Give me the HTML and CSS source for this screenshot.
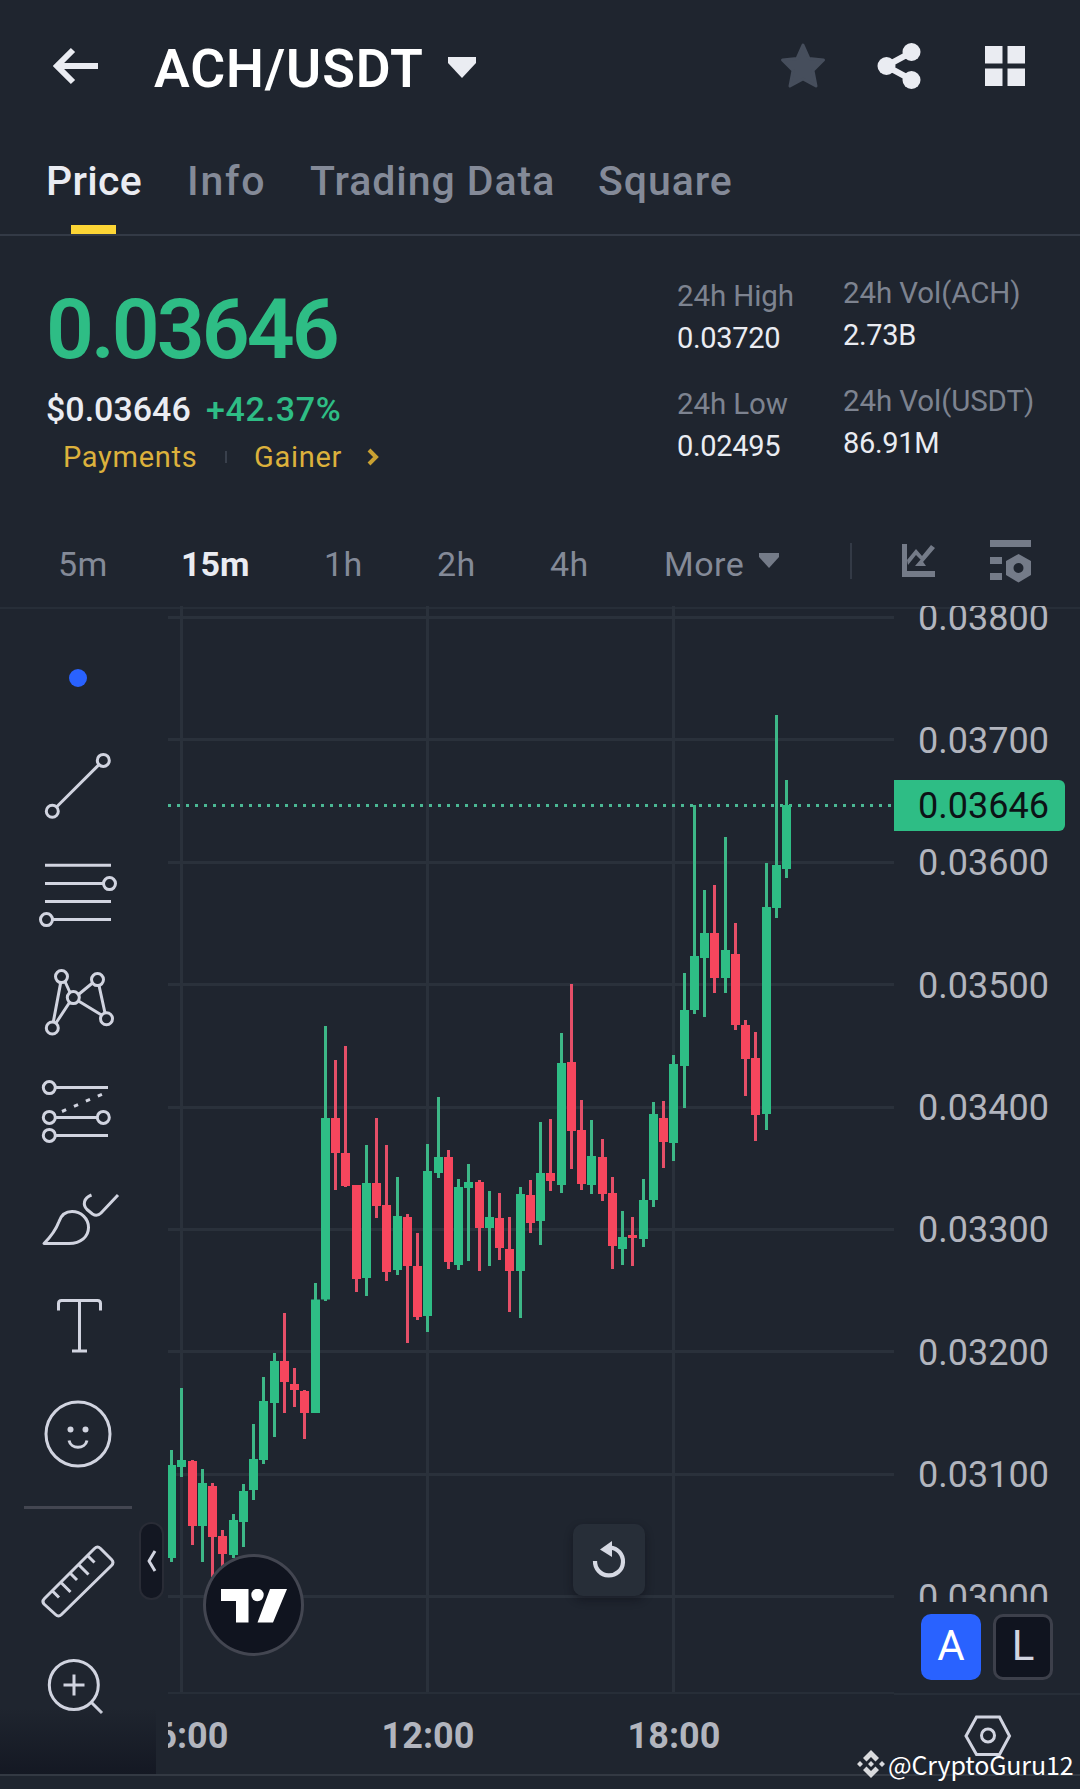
FILE: index.html
```html
<!DOCTYPE html>
<html lang="en">
<head>
    <meta charset="UTF-8">
    <meta name="viewport" content="width=device-width, initial-scale=1.0">
    <title>ACH/USDT</title>
    <link rel="stylesheet" href="styles.css">
</head>
<body>
    <header class="header">
        <svg class="back" width="48" height="40" viewBox="0 0 48 40">
            <path d="M46 20H6M21 4L5 20l16 16" fill="none" stroke="#eaecf2" stroke-width="6"/>
        </svg>
        <h1>ACH/USDT</h1>
        <svg class="caret" width="28" height="21" viewBox="0 0 28 21">
            <path d="M0 0h28v6L14 21 0 6z" fill="#eaecf2"/>
        </svg>
        <div class="header-icons">
            <svg width="46" height="48" viewBox="0 0 46 48">
                <path d="M23 3l6 13.500 14.500 1.500-10.500 10.500 3 15.500-13-7-13 7 3-15.500L2.500 18 17 16.500z" fill="#464e5c" stroke="#464e5c" stroke-width="3" stroke-linejoin="round"/>
            </svg>
            <svg width="44" height="48" viewBox="0 0 44 48" fill="#eaecf2">
                <path d="M35 10L9 24l26 14" fill="none" stroke="#eaecf2" stroke-width="6"/>
                <circle cx="9.500" cy="24" r="9"/>
                <circle cx="34.500" cy="10" r="9"/>
                <circle cx="34.500" cy="38" r="9"/>
            </svg>
            <svg width="40" height="40" viewBox="0 0 40 40">
                <path d="M0 0h17.500v17.500H0zM22.500 0H40v17.500H22.500zM0 22.500h17.500V40H0zM22.500 22.500H40V40H22.500z" fill="#eaecf2"/>
            </svg>
        </div>
    </header>

    <nav class="tabs">
        <a class="tab active">Price</a>
        <a class="tab info">Info</a>
        <a class="tab trading">Trading Data</a>
        <a class="tab">Square</a>
    </nav>

    <section class="ticker">
        <div class="quote">
            <div class="last-price">0.03646</div>
            <div class="change"><span class="usd">$0.03646</span><span class="percent">+42.37%</span></div>
            <div class="tags">
                <span class="tag-name">Payments</span>
                <span class="tag-sep"></span>
                <span class="tag-gainer">Gainer</span>
                <svg width="12" height="18" viewBox="0 0 12 18">
                    <path d="M2 2l7 7-7 7" fill="none" stroke="#c9a132" stroke-width="4"/>
                </svg>
            </div>
        </div>
        <dl class="stats">
            <dt>24h High</dt>
            <dd>0.03720</dd>
            <dt>24h Low</dt>
            <dd>0.02495</dd>
        </dl>
        <dl class="stats volume">
            <dt>24h Vol(ACH)</dt>
            <dd>2.73B</dd>
            <dt>24h Vol(USDT)</dt>
            <dd>86.91M</dd>
        </dl>
    </section>

    <div class="intervals">
        <span class="five">5m</span>
        <span class="fifteen selected">15m</span>
        <span class="hour">1h</span>
        <span class="hour">2h</span>
        <span class="four">4h</span>
        <span class="more">More</span>
        <svg class="more-caret" width="20" height="15" viewBox="0 0 20 15"><path d="M0 0h20v4L10 15 0 4z"/></svg>
        <i class="bar-sep"></i>
        <svg class="chart-type" width="33" height="34" viewBox="0 0 33 34">
            <path d="M0 0h5v27h28v6H0zM5 16L14 5l6 7L29 1l4 3-12 14-7-7-8 10zM13 22l6-7 5 7z"/>
        </svg>
        <svg class="chart-settings" width="42" height="43" viewBox="0 0 42 43">
            <path d="M0 0h41v7H0zM0 17h12v7H0zM0 33h12v7H0z"/>
            <path d="M28.500 14L41 21v14l-12.500 7.500L16 35V21zM28.500 23a5 5 0 100 10 5 5 0 000-10z" fill-rule="evenodd"/>
        </svg>
    </div>

    <main class="chart">
        <aside class="tools">
            <svg viewBox="0 0 156 108"><circle class="dot" cx="78" cy="54" r="9"/></svg>
            <svg viewBox="0 0 156 108">
                <circle cx="52.300" cy="79.300" r="6"/><circle cx="103.300" cy="28.400" r="6"/>
                <path d="M56.500 75L99 32.600"/>
            </svg>
            <svg viewBox="0 0 156 108">
                <path d="M45 25.200h66M45 43.600h58M45 61.600h66M53 79.600h58"/>
                <circle cx="109.500" cy="43.600" r="6"/><circle cx="46.500" cy="79.600" r="6"/>
            </svg>
            <svg viewBox="0 0 156 108">
                <path d="M60.700 34.600L53.300 74M65 33.500l5 11M56 75l13.500-20.500M78.500 46.500L92.500 35M78.500 53l23 14M99 37.500l6 27.500"/>
                <circle cx="61.500" cy="28.600" r="6"/><circle cx="97.500" cy="31.600" r="6"/>
                <circle cx="73.300" cy="49.600" r="6"/><circle cx="52.300" cy="80" r="6"/>
                <circle cx="106.500" cy="70.700" r="6"/>
            </svg>
            <svg viewBox="0 0 156 108">
                <path d="M55.500 31.600H108M55.500 61.400h42M55.500 79.400H108"/>
                <path d="M62 55.500L106 36.500" stroke-dasharray="4.500 8.500"/>
                <circle cx="49.300" cy="31.600" r="6"/><circle cx="49.300" cy="61.400" r="6"/>
                <circle cx="103.300" cy="61.400" r="6"/><circle cx="49.300" cy="79.400" r="6"/>
            </svg>
            <svg viewBox="0 0 156 108">
                <path d="M44 79.500h25c12 0 19.500-7 19.500-16S81 47.500 72 47.500c-7 0-11 4-13 10-3 8-8 15-15 22z"/>
                <path d="M91.500 31c-8 3-9 10-4.500 14.500l5.500 4.500c3 2 6 1.500 8.500-1l17-18"/>
            </svg>
            <svg viewBox="0 0 156 108">
                <path d="M58.500 38.500v-7q0-3 3-3h36q3 0 3 3v7M79.500 28.500V79M72 79h15"/>
            </svg>
            <svg viewBox="0 0 156 108">
                <circle cx="78" cy="54" r="32"/>
                <path d="M69 60.500c2 9 16 9 18 0"/>
                <circle class="eye" cx="70.500" cy="49.500" r="3"/><circle class="eye" cx="85.500" cy="49.500" r="3"/>
            </svg>
            <hr>
            <svg viewBox="0 0 156 108">
                <path d="M44.500 71.500l50-50q3-3 6 0l11 11q3 3 0 6l-50 49q-3 3-6 0l-11-10q-3-3 0-6zM53 64.500l6 6M61.500 56l9 9M71 47l6 6M79.500 38.500l9 9M88.500 29.500l6 6"/>
            </svg>
            <svg viewBox="0 0 156 108">
                <circle cx="73.800" cy="50" r="24.500"/>
                <path d="M63.500 50h21M74 39.500v21M91.500 67.500l10.500 10.500"/>
            </svg>
            <div class="tools-fade"></div>
            <div class="collapse">
                <svg width="10" height="24" viewBox="0 0 10 24"><path d="M8 2L2 12l6 10"/></svg>
            </div>
        </aside>

        <div class="plot">
            <svg id="candles" width="726" height="1088" viewBox="168 606 726 1088"></svg>
            <div class="times"><span>06:00</span><span>12:00</span><span>18:00</span></div>
            <div class="tv-logo">
                <svg width="66" height="34" viewBox="0 0 66 34" fill="#fff">
                    <path d="M0 0h27.500v33.500H15V12H0zM49 0h17L52 33.500H36.500z"/><circle cx="36.500" cy="6" r="6.200"/>
                </svg>
            </div>
            <div class="reset">
                <svg width="36" height="42" viewBox="0 0 36 42">
                    <path d="M4 20a14 14 0 1015-13.500" fill="none" stroke="#d6d9e3" stroke-width="4.200"/>
                    <path d="M9 8.500L21 0v16z" fill="#d6d9e3"/>
                </svg>
            </div>
        </div>

        <div class="axis">
            <div class="prices">
                <span>0.03800</span>
                <span>0.03700</span>
                <span>0.03600</span>
                <span>0.03500</span>
                <span>0.03400</span>
                <span>0.03300</span>
                <span>0.03200</span>
                <span>0.03100</span>
                <span>0.03000</span>
            </div>
            <div class="modes"><b class="auto">A</b><b class="log">L</b></div>
            <svg class="hex" width="48" height="42" viewBox="0 0 48 42" fill="none" stroke="#d1d4e0" stroke-width="3">
                <path d="M12.500 2h23l10 19-10 18.500h-23L2 21z"/><circle cx="24" cy="20.500" r="6.500"/>
            </svg>
            <div class="price-tag">0.03646</div>
        </div>
    </main>

    <div class="watermark">
        <svg width="28" height="28" viewBox="0 0 28 28" fill="#d9dadd">
            <path d="M14 0l8 8-3.500 3.500L14 7l-4.500 4.500L6 8zM14 28l8-8-3.500-3.500L14 21l-4.500-4.500L6 20zM3 11l3 3-3 3-3-3zM25 11l3 3-3 3-3-3zM14 11l3 3-3 3-3-3z"/>
        </svg>
        <span>@CryptoGuru12</span>
    </div>

    <script src="chart.js"></script>
</body>
</html>
```
FILE: styles.css
```css
body {
    margin: 0;
    width: 1080px;
    height: 1789px;
    overflow: hidden;
    position: relative;
    background-color: #1f252f;
    color: #eaecf2;
    font-family: Roboto, "Liberation Sans", sans-serif;
}

svg {
    display: block;
    flex-shrink: 0;
}

.header {
    display: flex;
    align-items: center;
    height: 132px;
    padding: 0 55px 0 52px;
}

h1 {
    width: 294px;
    margin: 0 0 0 54px;
    padding-top: 6px;
    font-size: 53.5px;
    line-height: 60px;
    font-weight: 600;
    letter-spacing: 0.9px;
    color: #fff;
}

.caret {
    margin-top: 2px;
}

.header-icons {
    display: flex;
    align-items: center;
    margin-left: auto;
}

.header-icons svg:nth-child(2) {
    margin: 0 64px 0 51px;
}

/* Page tabs */
.tabs {
    display: flex;
    height: 102px;
    padding-left: 46px;
    border-bottom: 2px solid #333a46;
    font-size: 41px;
    line-height: 98px;
    font-weight: 500;
    letter-spacing: 0.95px;
    color: #848a98;
}

.tab {
    position: relative;
    width: 141px;
    white-space: nowrap;
}

.tab.info {
    width: 123px;
    letter-spacing: 1.8px;
}

.tab.trading {
    width: 288px;
}

.tab.active {
    letter-spacing: 0.3px;
    color: #eaecf2;
}

.tab.active::after {
    content: "";
    position: absolute;
    left: 25px;
    bottom: 0;
    width: 45px;
    height: 9px;
    background-color: #fcd535;
}

/* Ticker */
.ticker {
    display: flex;
    height: 288px;
}

.quote {
    width: 631px;
    padding: 52px 0 0 46px;
}

.last-price {
    font-size: 84px;
    line-height: 84px;
    font-weight: 600;
    letter-spacing: -3px;
    color: #2ebd85;
}

.change {
    display: flex;
    margin-top: 16px;
    font-size: 34px;
    line-height: 42px;
    font-weight: 500;
}

.usd {
    width: 160px;
}

.percent {
    letter-spacing: 0.7px;
    color: #2ebd85;
}

.tags {
    display: flex;
    align-items: center;
    margin-top: 7px;
    padding-left: 17px;
    font-size: 29px;
    line-height: 40px;
    letter-spacing: 0.7px;
    color: #dcb13c;
}

.tag-name {
    width: 162px;
}

.tag-sep {
    width: 2px;
    height: 12px;
    margin-right: 27px;
    background-color: #39404c;
}

.tag-gainer {
    width: 113px;
}

.stats {
    width: 166px;
    margin: 0;
    padding-top: 42px;
    font-size: 29.5px;
    line-height: 36px;
    white-space: nowrap;
}

.stats.volume {
    width: 237px;
    padding-top: 39px;
}

.stats dt {
    letter-spacing: -0.1px;
    color: #7d8390;
}

.stats dd {
    margin: 6px 0 30px;
    font-size: 29px;
    letter-spacing: -0.3px;
}

/* Interval bar */
.intervals {
    display: flex;
    align-items: center;
    height: 80px;
    padding: 0 0 2px 58px;
    font-size: 34px;
    color: #848a98;
    fill: #747b88;
}

.intervals .five {
    width: 123px;
    letter-spacing: 0.5px;
}

.intervals .fifteen {
    width: 143px;
}

.intervals .hour {
    width: 113px;
    letter-spacing: 0.5px;
}

.intervals .four {
    width: 114px;
    letter-spacing: 0.5px;
}

.intervals .more {
    width: 95px;
    letter-spacing: 0.5px;
}

.selected {
    font-weight: 700;
    color: #eaecf2;
}

.more-caret {
    margin-top: -8px;
}

.bar-sep {
    width: 2px;
    height: 36px;
    margin: -6px 50px 0 71px;
    background-color: #333a46;
}

.chart-type {
    margin: -6px 55px 0 0;
}

.chart-settings {
    margin-top: -5px;
}

/* Chart */
.chart {
    display: flex;
    position: relative;
    height: 1168px;
    border-bottom: 2px solid #333943;
}

.chart::before {
    content: "";
    position: absolute;
    top: 1px;
    width: 100%;
    height: 2px;
    background-color: #272e38;
}

.tools {
    position: relative;
    width: 168px;
    padding-top: 18px;
    box-sizing: border-box;
    overflow: hidden;
}

.tools svg {
    width: 156px;
    height: 108px;
    fill: none;
    stroke: #d1d4e0;
    stroke-width: 3px;
    stroke-linejoin: round;
}

.tools .dot {
    fill: #2962ff;
    stroke: none;
}

.tools .eye {
    fill: #d1d4e0;
    stroke: none;
}

.tools hr {
    width: 108px;
    height: 3px;
    margin: 18px 0 18px 24px;
    border: 0;
    background-color: #434651;
}

.tools-fade {
    position: absolute;
    left: 0;
    bottom: 0;
    width: 156px;
    height: 66px;
    background: linear-gradient(rgba(20, 24, 35, 0), #141823);
}

.collapse {
    display: flex;
    align-items: center;
    justify-content: center;
    position: absolute;
    left: 139px;
    top: 916px;
    width: 25px;
    height: 78px;
    box-sizing: border-box;
    border: 2px solid #292c36;
    border-radius: 12px;
    background-color: #131722;
}

.collapse svg {
    width: 10px;
    height: 24px;
}

.plot {
    position: relative;
    width: 726px;
    overflow: hidden;
}

.times {
    display: flex;
    margin-left: -109px;
    font-size: 36px;
    line-height: 84px;
    font-weight: 700;
    color: #b2b5be;
}

.times span {
    flex: 0 0 246px;
    text-align: center;
}

.tv-logo {
    display: flex;
    align-items: center;
    justify-content: center;
    position: absolute;
    left: 35px;
    top: 948px;
    width: 101px;
    height: 102px;
    padding: 2px 0 0 1px;
    box-sizing: border-box;
    border: 3px solid #434651;
    border-radius: 50%;
    background-color: #10141f;
}

.reset {
    display: flex;
    align-items: center;
    justify-content: center;
    position: absolute;
    left: 405px;
    top: 918px;
    width: 72px;
    height: 68px;
    padding-top: 4px;
    border-radius: 10px;
    background-color: #272e38;
    box-shadow: 0 4px 8px rgba(10, 12, 20, 0.45);
}

.axis {
    position: relative;
    width: 186px;
}

.prices {
    height: 996px;
    overflow: hidden;
    font-size: 36px;
    color: #b2b5be;
}

.prices span {
    display: block;
    height: 122.4px;
    padding-left: 24px;
    line-height: 122.4px;
}

.prices span:first-child {
    margin-top: -48.6px;
}

.modes {
    display: flex;
    gap: 12px;
    height: 66px;
    padding: 12px 0 13px 27px;
    border-bottom: 2px solid #272e38;
}

.modes b {
    width: 60px;
    box-sizing: border-box;
    border-radius: 10px;
    font-size: 42px;
    line-height: 64px;
    font-weight: 400;
    text-align: center;
}

.auto {
    background-color: #2962ff;
    color: #fff;
}

.modes .log {
    border: 3px solid #3d404b;
    line-height: 58px;
    background-color: #10141f;
    color: #d1d4e0;
}

.hex {
    margin: 20px 0 0 70px;
}

.price-tag {
    position: absolute;
    left: 0;
    top: 174px;
    width: 171px;
    height: 51px;
    padding-left: 24px;
    box-sizing: border-box;
    border-radius: 0 6px 6px 0;
    background-color: #2ebd85;
    color: #0c1216;
    font-size: 36px;
    line-height: 53px;
}

.watermark {
    display: flex;
    align-items: center;
    position: absolute;
    left: 857px;
    top: 1746px;
    gap: 3px;
    font: 25px/36px "Noto Sans CJK SC", sans-serif;
    letter-spacing: -0.15px;
    color: #fff;
}
```
FILE: chart.js
```js
// high, body top, body bottom, low, direction (1 = up, 0 = down)
const candles = [
    [1450, 1465, 1558, 1562, 1],
    [1388, 1460, 1467, 1477, 1],
    [1460, 1461, 1526, 1545, 0],
    [1469, 1483, 1526, 1562, 1],
    [1483, 1486, 1537, 1577, 0],
    [1530, 1536, 1554, 1566, 0],
    [1514, 1520, 1555, 1558, 1],
    [1484, 1491, 1522, 1547, 1],
    [1424, 1459, 1490, 1500, 1],
    [1377, 1401, 1460, 1464, 1],
    [1353, 1361, 1403, 1437, 1],
    [1313, 1361, 1382, 1413, 0],
    [1368, 1384, 1390, 1407, 0],
    [1390, 1391, 1413, 1439, 0],
    [1283, 1299.5, 1413, 1413, 1],
    [1026, 1118, 1299.5, 1301, 1],
    [1060, 1118, 1153, 1190, 0],
    [1046, 1153, 1186, 1187, 0],
    [1185, 1185, 1279, 1292, 0],
    [1145, 1183, 1278, 1296, 1],
    [1118, 1183, 1206, 1218, 0],
    [1145, 1205, 1272, 1281, 0],
    [1177, 1216, 1270, 1275, 1],
    [1214, 1217, 1266, 1343, 0],
    [1233, 1266, 1317, 1320, 0],
    [1144, 1171, 1316, 1332, 1],
    [1097, 1157, 1173, 1178, 1],
    [1150, 1157, 1262, 1269, 0],
    [1179, 1187, 1265, 1270, 1],
    [1164, 1182, 1188, 1261, 1],
    [1180, 1182, 1228, 1271, 0],
    [1191, 1217, 1228, 1266, 1],
    [1193, 1218, 1248, 1260, 0],
    [1217, 1249, 1271, 1312, 0],
    [1187, 1194, 1271, 1318, 1],
    [1180, 1195, 1223, 1233, 0],
    [1122, 1173, 1221, 1245, 1],
    [1119, 1173, 1181, 1191, 0],
    [1033, 1063, 1185, 1193, 1],
    [984, 1062, 1131, 1169, 0],
    [1100, 1130, 1184, 1190, 0],
    [1120, 1156, 1185, 1194, 1],
    [1139, 1157, 1194, 1201, 0],
    [1177, 1193, 1246, 1269, 0],
    [1211, 1237, 1249, 1265, 1],
    [1217, 1235, 1238, 1266, 0],
    [1179, 1200, 1239, 1247, 1],
    [1102, 1114, 1200, 1207, 1],
    [1101, 1118, 1142, 1168, 0],
    [1055, 1064, 1143, 1161, 1],
    [973, 1010, 1066, 1108, 1],
    [805, 956, 1010, 1014, 1],
    [890, 933, 958, 1017, 1],
    [885, 933, 978, 993, 0],
    [837, 950, 978, 993, 1],
    [923, 954, 1025, 1030, 0],
    [1020, 1025, 1059, 1096, 0],
    [1032, 1058, 1115, 1141, 0],
    [863, 907, 1114, 1130, 1],
    [715, 865, 908, 918, 1],
    [780, 805, 869, 878, 1]
];

const rect = (x, y, w, h, color) =>
    `<rect x="${x}" y="${y}" width="${w}" height="${h}" fill="${color}"/>`;

let out = "";

// grid
for (let i = 0; i < 9; i++) {
    out += rect(168, Math.round(616 + i * 122.4), 726, 3, "#2a313b");
}
[180, 426, 672].forEach(x => {
    out += rect(x, 606, 3, 1087, "#2a313b");
});
out += rect(168, 1692, 726, 2, "#272e38");

// last price line
for (let x = 168; x < 894; x += 9) {
    out += rect(x, 804, 3, 3, "#4bb894");
}

candles.forEach(([high, top, bottom, low, up], i) => {
    const x = Math.round(170 + i * 10.25);
    out += rect(x, high, 3, low - high, up ? "#3db787" : "#e54f68");
    out += rect(x - 3, top, 9, bottom - top, up ? "#2ebd85" : "#f6465d");
});

document.getElementById("candles").innerHTML = out;
```
